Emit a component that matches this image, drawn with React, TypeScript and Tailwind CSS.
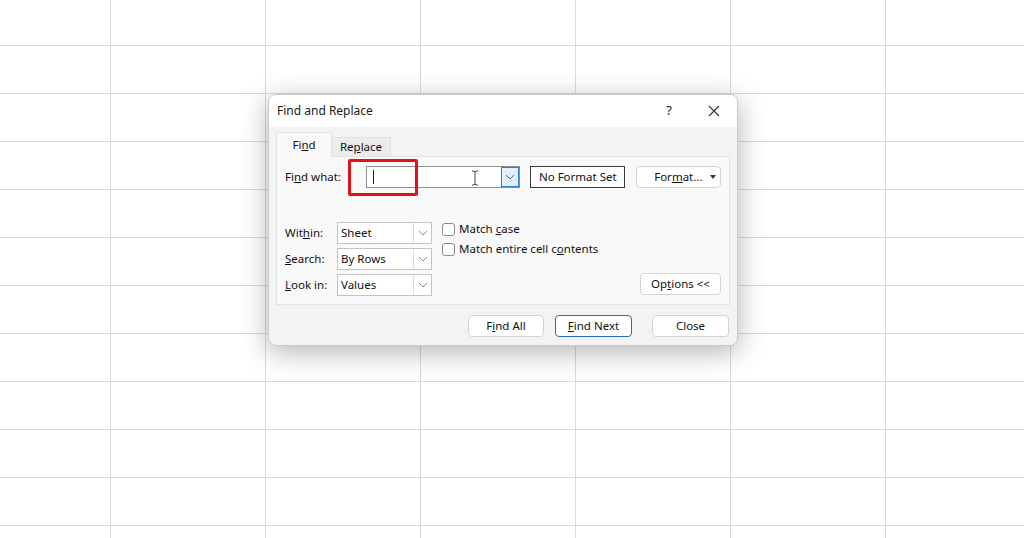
import React from "react";

const font = { fontFamily: '"Noto Sans", "Open Sans", sans-serif' };

function Chevron({ color = "#6b6b6b" }: { color?: string }) {
  return (
    <svg width="10" height="6" viewBox="0 0 10 6" fill="none">
      <path d="M1 1l4 4 4-4" stroke={color} strokeWidth="1" />
    </svg>
  );
}

function Select({ value }: { value: string }) {
  return (
    <div className="flex h-[22px] w-[95px] border border-[#c4c4c4] bg-white">
      <div className="flex flex-1 items-center pl-[3px] text-[11.5px] text-[#111]">{value}</div>
      <div className="flex w-[18px] items-center justify-center border-l border-[#dcdcdc]">
        <Chevron color="#8a8a8a" />
      </div>
    </div>
  );
}

function Btn({ children, w, primary }: { children: React.ReactNode; w: string; primary?: boolean }) {
  return (
    <div
      className={`flex h-[22px] items-center justify-center rounded-[4px] bg-white text-[11.5px] text-[#111] ${w} ${
        primary ? "border-[1.5px] border-[#1f6fbf]" : "border border-[#d3d3d3]"
      }`}
    >
      {children}
    </div>
  );
}

export default function App() {
  const cols = 7;
  const rows = 12;
  const cells = [];
  for (let r = 0; r < rows; r++) {
    for (let c = 0; c < cols; c++) {
      cells.push(<div key={`${r}-${c}`} className="border-b border-r border-[#dadada]" />);
    }
  }
  return (
    <div className="relative h-[538px] w-[1024px] overflow-hidden bg-white" style={font}>
      <div className="grid grid-cols-[111px_repeat(6,155px)] grid-rows-[46px_repeat(11,48px)]">{cells}</div>

      {/* dialog */}
      <div className="absolute left-[268px] top-[94px] flex h-[252px] w-[470px] flex-col overflow-hidden rounded-[8px] border border-[#c9c9c9] bg-[#f3f3f3] shadow-[0_6px_28px_rgba(0,0,0,0.30)]">
        {/* title */}
        <div className="flex h-[32px] items-center bg-white pl-[8px] text-[12px] text-[#1b1b1b]">
          <span className="flex-1">Find and Replace</span>
          <span className="mr-[36px] text-[13px]">?</span>
          <svg className="mr-[17px]" width="12" height="12" viewBox="0 0 12 12">
            <path d="M1 1l10 10M11 1L1 11" stroke="#333" strokeWidth="1.1" />
          </svg>
        </div>

        <div className="flex flex-1 flex-col px-[7px] pt-[5px]">
          {/* tabs */}
          <div className="flex h-[24px] items-end">
            <div className="relative z-10 -mb-px flex h-[25px] w-[56px] items-center justify-center border border-b-0 border-[#e2e2e2] bg-[#f9f9f9] text-[11.5px] text-[#111]">
              <span>
                Fi<u>n</u>d
              </span>
            </div>
            <div className="flex h-[19px] w-[59px] items-center justify-center border border-b-0 border-l-0 border-[#e2e2e2] bg-[#ececec] text-[11.5px] text-[#111]">
              <span>
                Re<u>p</u>lace
              </span>
            </div>
          </div>

          {/* panel */}
          <div className="relative flex h-[149px] flex-col border border-[#e2e2e2] bg-[#f9f9f9] px-[8px] pt-[9px]">
            <div className="flex items-center">
              <div className="w-[81px] text-[11.5px] text-[#111]">
                Fi<u>n</u>d what:
              </div>
              <div className="flex h-[22px] w-[155px] border border-[#8f8f8f] bg-white">
                <div className="relative flex flex-1 items-center">
                  <div className="ml-[6px] h-[14px] w-px bg-[#222]" />
                  <svg className="absolute left-[104px] top-[3px]" width="8" height="16" viewBox="0 0 8 16">
                    <path d="M1 1h2l1 1 1-1h2M4 2v12M1 15h2l1-1 1 1h2" stroke="#444" strokeWidth="1" fill="none" />
                  </svg>
                </div>
                <div className="flex w-[18px] items-center justify-center border border-[#2f7fd0] bg-[#e3eefa]">
                  <Chevron color="#3a6fa8" />
                </div>
              </div>
              <div className="ml-[10px] flex h-[22px] w-[95px] items-center justify-center border-[1.5px] border-[#3a3a3a] bg-white text-[11.5px] text-[#111]">
                No Format Set
              </div>
              <div className="ml-[11px] flex h-[22px] w-[85px] items-center rounded-[4px] border border-[#d3d3d3] bg-white text-[11.5px] text-[#111]">
                <span className="ml-[17px] flex-1">
                  For<u>m</u>at...
                </span>
                <svg className="mr-[4px]" width="6" height="4" viewBox="0 0 6 4">
                  <path d="M0 0h6L3 4z" fill="#333" />
                </svg>
              </div>
            </div>

            <div className="mt-[34px] flex">
              <div className="flex flex-col gap-[4px]">
                {[
                  [<>Wit<u>h</u>in:</>, "Sheet"],
                  [<><u>S</u>earch:</>, "By Rows"],
                  [<><u>L</u>ook in:</>, "Values"],
                ].map(([label, val], i) => (
                  <div key={i} className="flex items-center">
                    <div className="w-[52px] text-[11.5px] text-[#111]">{label}</div>
                    <Select value={val as string} />
                  </div>
                ))}
              </div>
              <div className="-mt-[1px] ml-[10px] flex flex-col gap-[4px]">
                <div className="flex h-[16px] items-center gap-[4px] text-[11.5px] text-[#111]">
                  <div className="h-[13px] w-[13px] rounded-[3px] border border-[#8a8a8a] bg-white" />
                  <span>
                    Match <u>c</u>ase
                  </span>
                </div>
                <div className="flex h-[16px] items-center gap-[4px] text-[11.5px] text-[#111]">
                  <div className="h-[13px] w-[13px] rounded-[3px] border border-[#8a8a8a] bg-white" />
                  <span>
                    Match entire cell c<u>o</u>ntents
                  </span>
                </div>
              </div>
              <div className="ml-auto flex items-end pb-[1px]">
                <Btn w="w-[81px]">
                  <span>
                    Op<u>t</u>ions &lt;&lt;
                  </span>
                </Btn>
              </div>
            </div>

            {/* red highlight */}
            <div className="absolute left-[71px] top-[2px] h-[37px] w-[70px] rounded-[2px] border-[3px] border-[#e3111b]" />
          </div>

          {/* bottom buttons */}
          <div className="mt-[10px] flex justify-end gap-[11px] pr-px">
            <Btn w="w-[76px]">
              <span>
                F<u>i</u>nd All
              </span>
            </Btn>
            <Btn w="w-[77px]" primary>
              <span>
                <u>F</u>ind Next
              </span>
            </Btn>
            <div className="ml-[9px]">
              <Btn w="w-[77px]">Close</Btn>
            </div>
          </div>
        </div>
      </div>
    </div>
  );
}
